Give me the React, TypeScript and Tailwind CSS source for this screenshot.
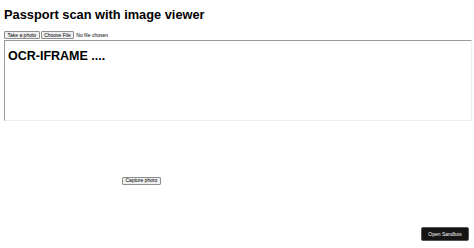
export default function App() {
  return (
    <div className="relative h-[248px] w-[474px] overflow-hidden bg-white text-black font-['Liberation_Sans',Arial,sans-serif]">
      <div className="px-1 pt-[7px]">
        <h1 className="text-[12.8px] font-bold leading-[16px]">Passport scan with image viewer</h1>

        <div className="mt-[8px] flex items-center gap-[1px] text-[5px] leading-none">
          <button className="h-[8px] rounded-[1px] border border-[#8f8f8f] bg-[#efefef] px-[2.5px]">
            Take a photo
          </button>
          <button className="h-[8px] rounded-[1px] border border-[#8f8f8f] bg-[#efefef] px-[2.5px]">
            Choose File
          </button>
          <span className="ml-[1px]">No file chosen</span>
        </div>

        <div className="mt-[1px] h-[81px] w-[468px] border-[1.5px] border-t-[#9a9a9a] border-l-[#9a9a9a] border-r-[#eeeeee] border-b-[#eeeeee] px-[3px] pt-[8px]">
          <div className="text-[12.5px] font-bold leading-[14px]">OCR-IFRAME ....</div>
        </div>

        <div className="mt-[44px] pl-[118px]">
          <button className="h-[8px] rounded-[1px] border border-[#8f8f8f] bg-[#efefef] px-[2.5px] text-[5px] leading-none">
            Capture photo
          </button>
        </div>
      </div>

      <button className="absolute left-[421px] top-[227px] h-[14px] w-[48px] rounded-[2px] border border-[#555] bg-[#151515] text-[5px] leading-none text-white">
        Open Sandbox
      </button>
    </div>
  )
}
